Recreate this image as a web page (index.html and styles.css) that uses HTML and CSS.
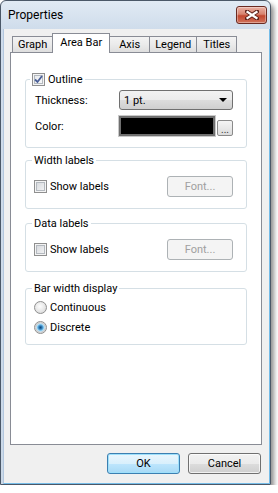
FILE: index.html
```html
<!DOCTYPE html>
<html lang="en">
<head>
    <meta charset="UTF-8">
    <title>Properties</title>
    <link rel="stylesheet" href="styles.css">
</head>
<body>

<div class="window">
    <div class="titlebar">
        <span class="title">Properties</span>
        <span class="close-btn">
            <svg width="14" height="10" viewBox="0 0 14 10">
                <path d="M2 1.5 L12 8.5 M12 1.5 L2 8.5" stroke="#5a1f18" stroke-width="4" stroke-linecap="square"/>
                <path d="M2.5 2 L11.5 8 M11.5 2 L2.5 8" stroke="#fff" stroke-width="2.2" stroke-linecap="square"/>
            </svg>
        </span>
    </div>

    <div class="client">
        <div class="tabs">
            <div class="tab">Graph</div>
            <div class="tab active">Area Bar</div>
            <div class="tab">Axis</div>
            <div class="tab">Legend</div>
            <div class="tab">Titles</div>
        </div>

        <div class="tab-panel">
            <!-- Outline -->
            <div class="group group-outline">
                <div class="group-title check-title">
                    <span class="checkbox checked">
                        <svg width="9" height="9" viewBox="0 0 9 9">
                            <path d="M1 4.5 L3.5 7 L8 1" fill="none" stroke="#4a5f97" stroke-width="1.8"/>
                        </svg>
                    </span>
                    <span>Outline</span>
                </div>
                <div class="row row-thickness">
                    <span class="row-label">Thickness:</span>
                    <div class="dropdown">
                        <span>1 pt.</span>
                        <span class="arrow"></span>
                    </div>
                </div>
                <div class="row row-color">
                    <span class="row-label">Color:</span>
                    <div class="swatch"></div>
                    <button class="dots-btn">...</button>
                </div>
            </div>

            <!-- Width labels -->
            <div class="group group-width">
                <div class="group-title">Width labels</div>
                <div class="row row-labels">
                    <label class="check"><span class="checkbox"></span>Show labels</label>
                    <button class="font-btn" disabled>Font...</button>
                </div>
            </div>

            <!-- Data labels -->
            <div class="group group-data">
                <div class="group-title">Data labels</div>
                <div class="row row-labels">
                    <label class="check"><span class="checkbox"></span>Show labels</label>
                    <button class="font-btn" disabled>Font...</button>
                </div>
            </div>

            <!-- Bar width display -->
            <div class="group group-bar">
                <div class="group-title">Bar width display</div>
                <label class="check radio-row first"><span class="radio"></span>Continuous</label>
                <label class="check radio-row"><span class="radio checked"></span>Discrete</label>
            </div>
        </div>

        <div class="buttons">
            <button class="btn btn-default">OK</button>
            <button class="btn">Cancel</button>
        </div>
    </div>
</div>

</body>
</html>
```

FILE: styles.css
```css
/* Alap */
* {
    box-sizing: border-box;
}

body {
    margin: 0;
    background-color: #fff;
    font-family: Roboto, "Liberation Sans", sans-serif;
    font-size: 11px;
    color: #000;
}

/* Ablak keret */
.window {
    width: 271px;
    height: 485px;
    border: 1px solid #4b5868;
    border-radius: 6px 6px 0 0;
    background: linear-gradient(#e1eaf4, #cfdceb 28px, #cbd9e8);
    box-shadow: 3px 4px 5px rgba(0, 0, 0, 0.45);
    display: flex;
    flex-direction: column;
}

.titlebar {
    height: 28px;
    display: flex;
    align-items: center;
    padding-left: 7px;
}

.title {
    font-size: 12px;
}

.close-btn {
    margin-left: auto;
    margin-right: 3px;
    width: 31px;
    height: 18px;
    border: 1px solid #6a2a22;
    border-radius: 3px;
    background: linear-gradient(#eab1a4, #d7836f 45%, #c2472f 55%, #d0735c);
    box-shadow: inset 0 0 0 1px rgba(255, 255, 255, 0.35);
    display: flex;
    align-items: center;
    justify-content: center;
}

.client {
    flex: 1;
    margin-left: 2px;
    border-left: 1px solid #b3c7de;
    border-right: 1px solid #76bde8;
    border-bottom: 1px solid #76bde8;
    background-color: #f0f0f0;
    padding: 4px 7px 0 6px;
}

/* Fülek */
.tabs {
    display: flex;
    align-items: flex-end;
    height: 20px;
    margin-bottom: -1px;
    padding-left: 2px;
    position: relative;
    z-index: 1;
}

.tab {
    height: 16px;
    min-width: 41px;
    margin-bottom: 1px;
    margin-right: -1px;
    padding: 1px 5px 0;
    line-height: 14px;
    text-align: center;
    border: 1px solid #898c95;
    border-bottom: none;
    background: linear-gradient(#f3f3f3, #ebebeb 50%, #dedede);
}

.tab.active {
    height: 20px;
    margin-bottom: 0;
    padding: 2px 7px 0;
    background: #fff;
    position: relative;
    z-index: 2;
}

.tab-panel {
    height: 393px;
    border: 1px solid #898c95;
    background-color: #fff;
    overflow: hidden;
}

/* Csoportok */
.group {
    margin: 0 14px;
    padding: 0 13px 0 9px;
    border: 1px solid #d5dfe5;
    border-radius: 3px;
}

.group-outline {
    margin-top: 26px;
    padding-bottom: 11px;
}

.group-width {
    margin-top: 12px;
    padding-bottom: 11px;
}

.group-data {
    margin-top: 14px;
    padding-bottom: 11px;
}

.group-bar {
    margin-top: 16px;
    padding-bottom: 7px;
}

.group-title {
    display: flex;
    align-items: center;
    width: max-content;
    height: 14px;
    margin: -8px 0 0 -3px;
    padding: 0 2px;
    background-color: #fff;
}

.group-title.check-title {
    margin-left: -5px;
    gap: 3px;
}

.row {
    display: flex;
    align-items: center;
}

.row-thickness {
    margin-top: 4px;
    height: 20px;
}

.row-color {
    margin-top: 6px;
    height: 20px;
    align-items: flex-end;
}

.row-color .row-label {
    align-self: center;
}

.row-label {
    width: 84px;
}

.row-labels {
    margin-top: 9px;
    height: 21px;
    justify-content: space-between;
}

/* Legördülő */
.dropdown {
    width: 114px;
    height: 20px;
    display: flex;
    align-items: center;
    justify-content: space-between;
    padding: 0 5px 0 4px;
    border: 1px solid #707070;
    border-radius: 3px;
    background: linear-gradient(#f2f2f2, #ebebeb 50%, #dddddd 51%, #cfcfcf);
}

.arrow {
    width: 0;
    height: 0;
    border-left: 4px solid transparent;
    border-right: 4px solid transparent;
    border-top: 4px solid #000;
}

.swatch {
    width: 96px;
    height: 20px;
    background-color: #000;
    border: 2px solid #6f6f6f;
    box-shadow: 0 0 0 1px #c9c9c9;
}

.dots-btn {
    width: 16px;
    height: 16px;
    margin-left: 2px;
    padding: 0;
    font-family: inherit;
    font-size: 10px;
    line-height: 18px;
    color: #333;
    border: 1px solid #8a8a8a;
    border-radius: 2px;
    background: linear-gradient(#f4f4f4, #dcdcdc);
}

/* Jelölőnégyzet, rádiógomb */
.check {
    display: flex;
    align-items: center;
    gap: 3px;
    margin-left: -1px;
}

.checkbox {
    width: 13px;
    height: 13px;
    flex: none;
    display: flex;
    align-items: center;
    justify-content: center;
    border: 1px solid #8f8f8f;
    background: linear-gradient(135deg, #d2d5da, #f7f7f7);
    box-shadow: inset 0 0 0 1px #f4f4f4, inset 0 0 0 2px #b4b9bf;
}

.checkbox.checked {
    background: linear-gradient(135deg, #e4e7eb, #fbfbfb);
}

.radio-row {
    height: 20px;
}

.radio-row.first {
    margin-top: 2px;
}

.radio {
    width: 13px;
    height: 13px;
    flex: none;
    border-radius: 50%;
    border: 1px solid #8f8f8f;
    background: radial-gradient(circle at 45% 40%, #fdfdfd, #e4e4e4 60%, #cfcfcf);
}

.radio.checked {
    background: radial-gradient(circle at 50% 50%, #12497a 0, #2c78b4 1.5px, #7cc3ec 3px, #c2e4f7 3.8px, #c9c9c9 4.6px, #ececec 6px);
}

/* Gombok */
.font-btn {
    width: 66px;
    height: 21px;
    padding: 0;
    font-family: inherit;
    font-size: 11px;
    color: #a0a0a0;
    border: 1px solid #adb2b5;
    border-radius: 3px;
    background-color: #f4f4f4;
}

.buttons {
    display: flex;
    justify-content: flex-end;
    gap: 8px;
    margin-top: 8px;
    padding-right: 1px;
}

.btn {
    width: 73px;
    height: 21px;
    padding: 0;
    font-family: inherit;
    font-size: 11px;
    color: #000;
    border: 1px solid #707070;
    border-radius: 3px;
    background: linear-gradient(#f2f2f2, #ebebeb 50%, #dddddd 51%, #cfcfcf);
    box-shadow: inset 0 0 0 1px rgba(255, 255, 255, 0.7);
}

.btn-default {
    border-color: #3c7fb1;
    background: linear-gradient(#eaf6fd, #d9f0fc 50%, #bee6fd 51%, #a7d9f5);
    box-shadow: inset 0 0 0 1px #9ee0fb;
}
```
